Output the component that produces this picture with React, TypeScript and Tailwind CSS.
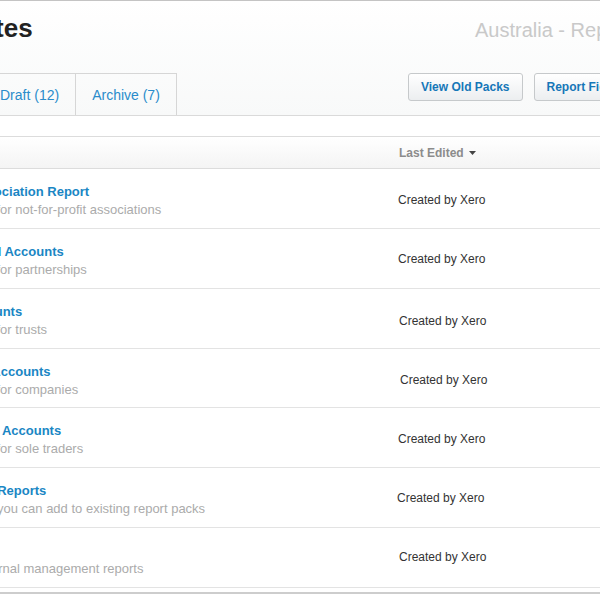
import React from 'react';

interface TemplateRow {
  title: string;
  titleOffset: string;
  description: string;
  descOffset: string;
  height: string;
  createdPos: string;
}

const rows: TemplateRow[] = [
  {
    title: 'Association Report',
    titleOffset: 'ml-[-30px]',
    description: 'for not-for-profit associations',
    descOffset: 'ml-[-3.5px]',
    height: 'h-[60px]',
    createdPos: 'ml-0 pt-[23px]',
  },
  {
    title: 'Financial Accounts',
    titleOffset: 'ml-[-55px]',
    description: 'for partnerships',
    descOffset: 'ml-[-3.5px]',
    height: 'h-[60px]',
    createdPos: 'ml-0 pt-[22px]',
  },
  {
    title: 'Trust Accounts',
    titleOffset: 'ml-[-72px]',
    description: 'for trusts',
    descOffset: 'ml-[-3.5px]',
    height: 'h-[60px]',
    createdPos: 'ml-[1px] pt-[24px]',
  },
  {
    title: 'Company Accounts',
    titleOffset: 'ml-[-71px]',
    description: 'for companies',
    descOffset: 'ml-[-3.5px]',
    height: 'h-[59px]',
    createdPos: 'ml-[2px] pt-[23px]',
  },
  {
    title: 'Sole Trader Accounts',
    titleOffset: 'ml-[-72px]',
    description: 'for sole traders',
    descOffset: 'ml-[-3.5px]',
    height: 'h-[60px]',
    createdPos: 'ml-0 pt-[23px]',
  },
  {
    title: 'Additional Reports',
    titleOffset: 'ml-[-70px]',
    description: 'you can add to existing report packs',
    descOffset: 'ml-[-3px]',
    height: 'h-[60px]',
    createdPos: 'ml-[-1px] pt-[22px]',
  },
  {
    title: 'Standard',
    titleOffset: 'ml-[-72px]',
    description: 'Internal management reports',
    descOffset: 'ml-[-23.5px]',
    height: 'h-[60px]',
    createdPos: 'ml-[1px] pt-[21px]',
  },
];

function SortArrow() {
  return (
    <svg width="7" height="4" viewBox="0 0 7 4" className="ml-[5px] mt-[1px]">
      <path d="M0 0h7L3.5 4z" fill="#444" />
    </svg>
  );
}

export default function App() {
  return (
    <div className="w-[600px] h-[594px] overflow-hidden bg-white font-['Liberation_Sans',Arial,sans-serif]">
      {/* page header */}
      <div className="border-t border-b border-t-[#c4c4c4] border-b-[#dadada] bg-gradient-to-b from-white to-[#f8f9f9] pt-[12px]">
        <div className="flex items-start justify-between">
          <h1 className="ml-[-94px] whitespace-nowrap text-[26px] leading-[30px] font-bold text-[#222]">
            Templates
          </h1>
          <div className="w-[125px] shrink-0 mt-[5px] whitespace-nowrap text-[20px] leading-6 text-[#c9c9c9]">
            Australia - Report Packs
          </div>
        </div>

        <div className="mt-[30px] flex items-start justify-between">
          <div className="ml-[-17px] flex">
            <div className="h-[42px] border-t border-l border-[#d6d6d6] px-4 text-[14px] leading-[42px] whitespace-nowrap text-[#2a8ccb]">
              Draft (12)
            </div>
            <div className="h-[42px] border-t border-x border-[#d6d6d6] px-4 text-[14px] leading-[42px] whitespace-nowrap text-[#2a8ccb]">
              Archive (7)
            </div>
          </div>
          <div className="w-[192px] shrink-0 flex gap-[11px] whitespace-nowrap">
            <button className="h-[28px] shrink-0 rounded-[3px] border border-[#c6c9cb] bg-gradient-to-b from-white to-[#eceef0] px-3 text-[12px] font-bold text-[#1677b8]">
              View Old Packs
            </button>
            <button className="h-[28px] shrink-0 rounded-[3px] border border-[#c6c9cb] bg-gradient-to-b from-white to-[#eceef0] px-3 text-[12px] font-bold text-[#1677b8]">
              Report Fields
            </button>
          </div>
        </div>
      </div>

      {/* table header */}
      <div className="mt-[20px] flex h-[33px] items-center border-y border-[#dcdcdc] bg-gradient-to-b from-white to-[#f4f4f4]">
        <div className="w-[399px] shrink-0" />
        <div className="flex items-center text-[12px] font-bold text-[#8c8c8c]">
          Last Edited
          <SortArrow />
        </div>
      </div>

      {/* template rows */}
      {rows.map((row) => (
        <div key={row.title} className={`flex border-b border-[#e3e3e3] ${row.height}`}>
          <div className="w-[398px] shrink-0 pt-[14px]">
            <div className={`whitespace-nowrap text-[13px] leading-[18px] font-bold text-[#1a86c4] ${row.titleOffset}`}>
              {row.title}
            </div>
            <div className={`whitespace-nowrap text-[13px] leading-[18px] text-[#ababab] ${row.descOffset}`}>
              {row.description}
            </div>
          </div>
          <div className={`whitespace-nowrap text-[12px] leading-4 text-[#333] ${row.createdPos}`}>
            Created by Xero
          </div>
        </div>
      ))}
      <div className="mt-[4px] border-t-2 border-[#cdcdcd]" />
    </div>
  );
}
